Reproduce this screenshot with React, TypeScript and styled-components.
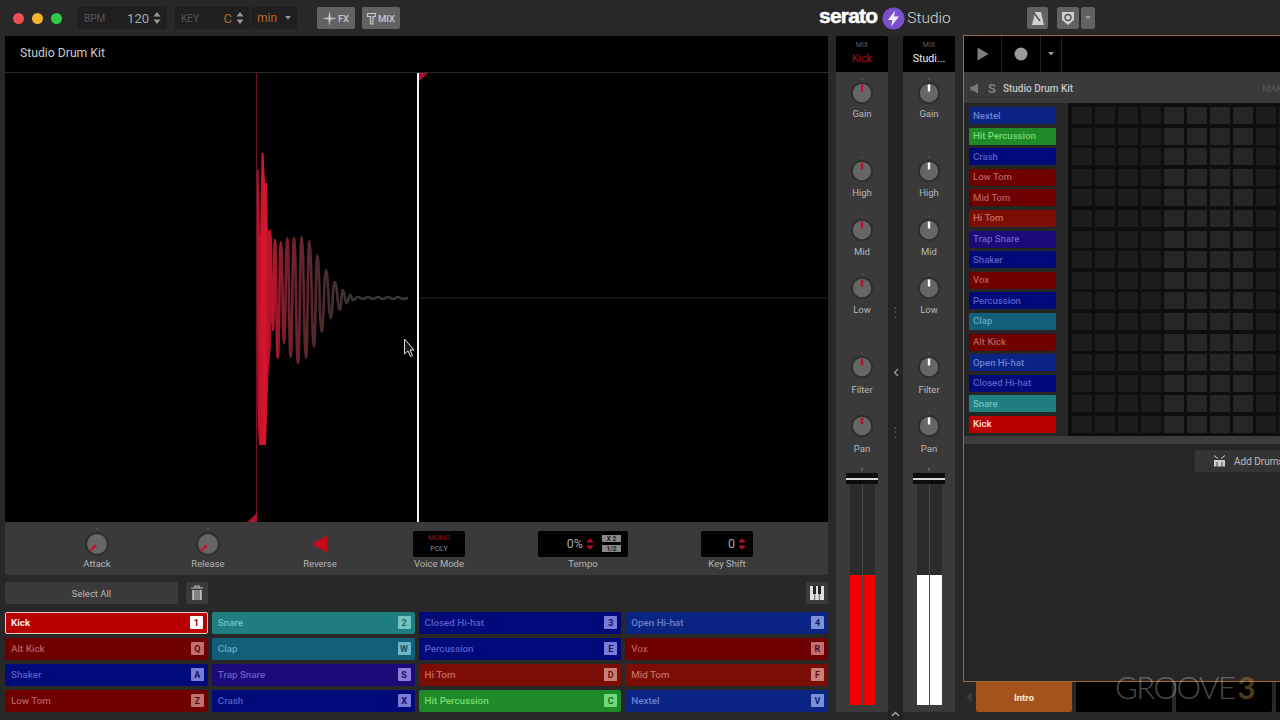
import React from "react";
import styled, { createGlobalStyle } from "styled-components";

const sans = `Roboto, "Liberation Sans", sans-serif`;

const GlobalStyle = createGlobalStyle`
  html, body {
    margin: 0;
    padding: 0;
    background: #282828;
    font-family: ${sans};
  }
  * {
    box-sizing: border-box;
  }
`;

type Tone = {
  bg: string;
  text: string;
  badge: string;
  badgeText: string;
};

const red: Tone = { bg: "#6f0000", text: "#b85c5c", badge: "#c07070", badgeText: "#5a0c0c" };
const rust: Tone = { bg: "#7a0e04", text: "#c26a60", badge: "#c8807a", badgeText: "#6a1008" };
const navy: Tone = { bg: "#000a78", text: "#5a5cc8", badge: "#7c7cd8", badgeText: "#10106a" };
const blue: Tone = { bg: "#0a2484", text: "#6a80cc", badge: "#7a90d8", badgeText: "#0a2070" };
const violet: Tone = { bg: "#1c0a78", text: "#6a5cc8", badge: "#8a7cd8", badgeText: "#1c0a68" };
const teal: Tone = { bg: "#1f7f80", text: "#70c0c0", badge: "#76c4c2", badgeText: "#1a6a6a" };
const sea: Tone = { bg: "#135e78", text: "#62aac0", badge: "#70b4c8", badgeText: "#105068" };
const green: Tone = { bg: "#1f8a28", text: "#74dc74", badge: "#74d87c", badgeText: "#147020" };
const active: Tone = { bg: "#b80000", text: "#ffe8e8", badge: "#ffffff", badgeText: "#8a0000" };

const pads: { name: string; hotkey: string; tone: Tone; selected?: boolean }[] = [
  { name: "Kick", hotkey: "1", tone: active, selected: true },
  { name: "Snare", hotkey: "2", tone: teal },
  { name: "Closed Hi-hat", hotkey: "3", tone: navy },
  { name: "Open Hi-hat", hotkey: "4", tone: blue },
  { name: "Alt Kick", hotkey: "Q", tone: red },
  { name: "Clap", hotkey: "W", tone: sea },
  { name: "Percussion", hotkey: "E", tone: navy },
  { name: "Vox", hotkey: "R", tone: red },
  { name: "Shaker", hotkey: "A", tone: navy },
  { name: "Trap Snare", hotkey: "S", tone: violet },
  { name: "Hi Tom", hotkey: "D", tone: rust },
  { name: "Mid Tom", hotkey: "F", tone: rust },
  { name: "Low Tom", hotkey: "Z", tone: red },
  { name: "Crash", hotkey: "X", tone: navy },
  { name: "Hit Percussion", hotkey: "C", tone: green },
  { name: "Nextel", hotkey: "V", tone: blue },
];

const tracks: { name: string; tone: Tone }[] = [
  { name: "Nextel", tone: blue },
  { name: "Hit Percussion", tone: green },
  { name: "Crash", tone: navy },
  { name: "Low Tom", tone: red },
  { name: "Mid Tom", tone: red },
  { name: "Hi Tom", tone: rust },
  { name: "Trap Snare", tone: violet },
  { name: "Shaker", tone: navy },
  { name: "Vox", tone: red },
  { name: "Percussion", tone: navy },
  { name: "Clap", tone: sea },
  { name: "Alt Kick", tone: red },
  { name: "Open Hi-hat", tone: blue },
  { name: "Closed Hi-hat", tone: navy },
  { name: "Snare", tone: teal },
  { name: "Kick", tone: active },
];

const knobs = [
  { label: "Gain", gap: 9, drop: 3 },
  { label: "High", gap: 40, drop: 4 },
  { label: "Mid", gap: 21, drop: 4 },
  { label: "Low", gap: 20, drop: 4 },
  { label: "Filter", gap: 41, drop: 5 },
  { label: "Pan", gap: 21, drop: 5 },
];

// waveform peaks read off the sample display, page coordinates
const wavePeaks = [
  [270, 230], [273, 330], [275, 240], [277.7, 358], [281, 242], [284, 343], [287.3, 238],
  [290.7, 357], [294, 238], [298, 363], [301.7, 237], [306, 358], [309.3, 241], [314, 347],
  [317.3, 255], [321.7, 332], [326, 270], [330.7, 318], [334.7, 282], [340, 310], [342.7, 290],
  [346.7, 303], [350, 295], [353, 300], [358, 297], [363, 299], [368, 297], [373, 299],
  [378, 297], [383, 299], [388, 297], [393, 299], [398, 297], [403, 299], [408, 298],
];

function wavePath() {
  let d = `M${wavePeaks[0][0]} ${wavePeaks[0][1]}`;
  for (let i = 1; i < wavePeaks.length; i++) {
    const [px, py] = wavePeaks[i - 1];
    const [x, y] = wavePeaks[i];
    const mid = (px + x) / 2;
    d += ` C${mid} ${py} ${mid} ${y} ${x} ${y}`;
  }
  return d;
}

function Stepper({ color }: { color: string }) {
  return (
    <svg width="8" height="14" viewBox="0 0 8 14">
      <path d="M4 1 L7.5 5.5 H0.5 Z" fill={color} />
      <path d="M4 13 L7.5 8.5 H0.5 Z" fill={color} />
    </svg>
  );
}

function Caret() {
  return (
    <svg width="6" height="4" viewBox="0 0 6 4">
      <path d="M0 0 H6 L3 3.5 Z" fill="#999" />
    </svg>
  );
}

function Knob({ angle, color, size = 24 }: { angle: number; color: string; size?: number }) {
  return (
    <KnobSvg width={size} height={size} viewBox="0 0 24 24">
      <line x1="12" y1="-2.5" x2="12" y2="-1" stroke="#666" />
      <circle cx="12" cy="12" r="11" fill="#2d2d2d" />
      <circle cx="12" cy="12" r="9.2" fill="#666666" />
      <line
        x1="12"
        y1="3.5"
        x2="12"
        y2="10.5"
        stroke={color}
        strokeWidth="2.4"
        transform={`rotate(${angle} 12 12)`}
      />
    </KnobSvg>
  );
}

function Waveform() {
  return (
    <WaveSvg viewBox="5 72 823 450">
      <defs>
        <linearGradient id="decay" gradientUnits="userSpaceOnUse" x1="268" y1="0" x2="352" y2="0">
          <stop offset="0" stopColor="#c8142c" />
          <stop offset="0.2" stopColor="#7c1e2c" />
          <stop offset="0.6" stopColor="#4e2a2c" />
          <stop offset="1" stopColor="#383632" />
        </linearGradient>
        <linearGradient id="attack" gradientUnits="userSpaceOnUse" x1="257" y1="0" x2="272" y2="0">
          <stop offset="0" stopColor="#b8122a" />
          <stop offset="0.5" stopColor="#d8142e" />
          <stop offset="1" stopColor="#9a1426" />
        </linearGradient>
      </defs>
      <line x1="5" y1="72.5" x2="828" y2="72.5" stroke="#2c2c2c" />
      <line x1="418" y1="298" x2="828" y2="298" stroke="#222222" />
      <line x1="256.5" y1="73" x2="256.5" y2="522" stroke="#701020" />
      <WaveBody>
        <path
          d="M257 298 V170 L258.5 170 L260 240 L261.5 153 L263.5 153 L265 183 L267 183 L268 230 L271 232 V345 L268.5 372 L266 445 L259 445 L257.5 420 Z"
          fill="url(#attack)"
        />
        <path d={wavePath()} fill="none" stroke="url(#decay)" strokeWidth="2.6" strokeLinejoin="round" />
      </WaveBody>
      <rect x="417" y="73" width="2" height="449" fill="#f2f2f2" />
      <path d="M419 73 H428 L419 81 Z" fill="#b01030" />
      <path d="M257 513 V522 H247 Z" fill="#b01030" />
      <path
        d="M404.5 339 V354 L408 351 L410.5 356.5 L412.5 355.5 L410 350 L414 350 Z"
        fill="#1c1c1c"
        stroke="#dcdcdc"
        strokeWidth="1"
      />
    </WaveSvg>
  );
}

function Strip({
  title,
  color,
  level,
  meter,
  gap,
}: {
  title: string;
  color: string;
  level: number;
  meter: string;
  gap: number;
}) {
  return (
    <StripColumn $gap={gap}>
      <StripHead>
        <StripMix>MIX</StripMix>
        <StripName $color={color}>{title}</StripName>
      </StripHead>
      <StripBody>
        {knobs.map((k) => (
          <KnobGroup key={k.label} $gap={k.gap}>
            <Knob angle={0} color={meter === "#ffffff" ? "#ffffff" : "#b81030"} />
            <KnobLabel $drop={k.drop}>{k.label}</KnobLabel>
          </KnobGroup>
        ))}
        <FaderHandle />
        <Meter>
          <MeterChannel>
            <MeterFill $color={meter} style={{ height: `${level}%` }} />
          </MeterChannel>
          <MeterChannel>
            <MeterFill $color={meter} style={{ height: `${level}%` }} />
          </MeterChannel>
        </Meter>
      </StripBody>
    </StripColumn>
  );
}

export default function App() {
  const cells = Array.from({ length: 160 }, (_, i) => i % 10);

  return (
    <Page>
      <GlobalStyle />
      <TopBar>
        <Lights>
          <Light $color="#ee5052" />
          <Light $color="#f5b32f" />
          <Light $color="#2fc94a" />
        </Lights>
        <ReadoutBox $width={89} $gap={16}>
          <ReadoutLabel>BPM</ReadoutLabel>
          <ReadoutValue $color="#a8a8a8">120</ReadoutValue>
          <Stepper color="#9a9a9a" />
        </ReadoutBox>
        <ReadoutBox $width={75} $gap={8}>
          <ReadoutLabel>KEY</ReadoutLabel>
          <ReadoutValue $color="#b5682a">C</ReadoutValue>
          <Stepper color="#9a9a9a" />
        </ReadoutBox>
        <ReadoutBox $width={46} $gap={1}>
          <MinText>min</MinText>
          <Caret />
        </ReadoutBox>
        <ToggleButton $gap={20}>
          <svg width="13" height="13" viewBox="0 0 13 13">
            <path d="M6.5 0.5 L7.3 5.7 L12.5 6.5 L7.3 7.3 L6.5 12.5 L5.7 7.3 L0.5 6.5 L5.7 5.7 Z" fill="#c8c8c8" stroke="#c8c8c8" strokeWidth="0.6" />
          </svg>
          FX
        </ToggleButton>
        <ToggleButton $gap={7}>
          <svg width="9" height="13" viewBox="0 0 9 13">
            <path d="M0.5 1.5 H8.5 V4.5 H6 V12 H3.5 V4.5 H0.5 Z" fill="none" stroke="#c8c8c8" strokeWidth="1.2" />
          </svg>
          MIX
        </ToggleButton>
        <Logo>
          <LogoWord>serato</LogoWord>
          <LogoMark>
            <svg width="23" height="23" viewBox="0 0 23 23">
              <circle cx="11.5" cy="11.5" r="11" fill="#7a4fd0" />
              <path d="M13 3.5 L6 13 H10.5 L9 19.5 L17 9.5 H12 Z" fill="#f4f0ff" />
            </svg>
          </LogoMark>
          <LogoStudio>Studio</LogoStudio>
        </Logo>
        <IconButton $gap={74} $width={21}>
          <svg width="14" height="15" viewBox="0 0 14 15">
            <path d="M4 1 H10 L13 14 H1 Z" fill="#d0d0d0" />
            <path d="M3 2 L9 10" stroke="#555" strokeWidth="1.5" />
          </svg>
        </IconButton>
        <IconButton $gap={9} $width={22}>
          <svg width="14" height="15" viewBox="0 0 14 15">
            <path d="M1 1 H13 V9 L7 14 L1 9 Z" fill="#d0d0d0" />
            <circle cx="7" cy="6.5" r="3" fill="none" stroke="#555" strokeWidth="1.4" />
          </svg>
        </IconButton>
        <IconButton $gap={2} $width={14}>
          <Caret />
        </IconButton>
      </TopBar>

      <Main>
        <LeftColumn>
          <KitHeader>Studio Drum Kit</KitHeader>
          <Waveform />
          <Controls>
            <Control>
              <ControlTop>
                <Knob angle={-135} color="#d01030" size={26} />
              </ControlTop>
              <ControlLabel>Attack</ControlLabel>
            </Control>
            <Control>
              <ControlTop>
                <Knob angle={-135} color="#d01030" size={26} />
              </ControlTop>
              <ControlLabel>Release</ControlLabel>
            </Control>
            <Control>
              <ControlTop>
                <svg width="18" height="20" viewBox="0 0 18 20">
                  <path d="M16.5 1 V19 L1 10 Z" fill="#c00c14" />
                </svg>
              </ControlTop>
              <ControlLabel>Reverse</ControlLabel>
            </Control>
            <Control>
              <ControlTop>
                <VoiceBox>
                  <VoiceOption $on>MONO</VoiceOption>
                  <VoiceOption>POLY</VoiceOption>
                </VoiceBox>
              </ControlTop>
              <ControlLabel>Voice Mode</ControlLabel>
            </Control>
            <Control>
              <ControlTop>
                <ValueBox $width={90}>
                  <ValueText>0%</ValueText>
                  <Stepper color="#b81020" />
                  <RateStack>
                    <RateChip>X 2</RateChip>
                    <RateChip>1/2</RateChip>
                  </RateStack>
                </ValueBox>
              </ControlTop>
              <ControlLabel>Tempo</ControlLabel>
            </Control>
            <Control>
              <ControlTop>
                <ValueBox $width={52}>
                  <ValueText>0</ValueText>
                  <Stepper color="#b81020" />
                </ValueBox>
              </ControlTop>
              <ControlLabel>Key Shift</ControlLabel>
            </Control>
          </Controls>

          <PadTools>
            <SelectAll>Select All</SelectAll>
            <SquareTool>
              <svg width="14" height="16" viewBox="0 0 14 16">
                <path d="M1 3 H13 M5 3 V1 H9 V3" fill="none" stroke="#bdbdbd" strokeWidth="1.2" />
                <path d="M2.2 5 H11.8 V15 H2.2 Z" fill="#bdbdbd" />
                <path d="M5 5 V15 M7 5 V15 M9 5 V15" stroke="#3a3a3a" strokeWidth="0.9" />
              </svg>
            </SquareTool>
            <PianoTool>
              <svg width="14" height="14" viewBox="0 0 14 14">
                <rect width="14" height="14" fill="#dedede" />
                <path d="M4.7 0 V14 M9.3 0 V14" stroke="#3a3a3a" strokeWidth="0.8" />
                <path d="M3 0 H6 V8 H3 Z M8 0 H11 V8 H8 Z" fill="#222" />
              </svg>
            </PianoTool>
          </PadTools>

          <PadGrid>
            {pads.map((pad) => (
              <Pad key={pad.name} $tone={pad.tone} $selected={pad.selected}>
                <PadName $selected={pad.selected}>{pad.name}</PadName>
                <Hotkey $tone={pad.tone}>{pad.hotkey}</Hotkey>
              </Pad>
            ))}
          </PadGrid>
        </LeftColumn>

        <Strip title="Kick" color="#a81020" level={59} meter="#ee0000" gap={8} />
        <Gutter>
          <GripDots>⋮</GripDots>
          <GutterArrow $top={48}>
            <svg width="6" height="9" viewBox="0 0 6 9">
              <path d="M5 1 L1.5 4.5 L5 8" fill="none" stroke="#999" strokeWidth="1.3" />
            </svg>
          </GutterArrow>
          <GripDots $top={47}>⋮</GripDots>
          <GutterArrow $auto>
            <svg width="9" height="6" viewBox="0 0 9 6">
              <path d="M1 5 L4.5 1.5 L8 5" fill="none" stroke="#aaa" strokeWidth="1.4" />
            </svg>
          </GutterArrow>
        </Gutter>
        <Strip title="Studi..." color="#f0f0f0" level={59} meter="#ffffff" gap={0} />

        <RightColumn>
          <ArrangePanel>
            <Transport>
              <TransportCell $width={38}>
                <svg width="12" height="14" viewBox="0 0 12 14">
                  <path d="M0.5 0.5 L11.5 7 L0.5 13.5 Z" fill="#7e7e7e" />
                </svg>
              </TransportCell>
              <TransportCell $width={39}>
                <svg width="14" height="14" viewBox="0 0 14 14">
                  <circle cx="7" cy="7" r="6.5" fill="#9a9a9a" />
                </svg>
              </TransportCell>
              <TransportCell $width={21}>
                <Caret />
              </TransportCell>
            </Transport>
            <TrackHeader>
              <svg width="9" height="11" viewBox="0 0 9 11">
                <path d="M8 0.5 V10.5 L3 7.5 H0.5 V3.5 H3 Z" fill="#7a7a7a" />
              </svg>
              <SoloMark>S</SoloMark>
              <TrackTitle>Studio Drum Kit</TrackTitle>
              <TrackMode>MAKE</TrackMode>
            </TrackHeader>
            <Sequencer>
              <TrackList>
                {tracks.map((t) => (
                  <TrackLabel key={t.name} $tone={t.tone}>
                    {t.name}
                  </TrackLabel>
                ))}
              </TrackList>
              <StepGrid>
                {cells.map((col, i) => (
                  <StepCell key={i} $light={col >= 4 && col < 8} />
                ))}
              </StepGrid>
            </Sequencer>
            <ScrollBand />
            <AddDrums>
              <svg width="13" height="12" viewBox="0 0 13 12">
                <path d="M1 0.5 L5 3.5 M12 0.5 L8 3.5" stroke="#cfcfcf" strokeWidth="1" />
                <path d="M1 5 H12 V11.5 H1 Z" fill="#cfcfcf" />
                <path d="M4 7 V11.5 M9 7 V11.5" stroke="#444" strokeWidth="1" />
              </svg>
              <span>Add Drums</span>
            </AddDrums>
          </ArrangePanel>
          <SceneRow>
            <SceneArrow>
              <svg width="6" height="10" viewBox="0 0 6 10">
                <path d="M5.5 0.5 V9.5 L0.5 5 Z" fill="#3e3e3e" />
              </svg>
            </SceneArrow>
            <SceneTab $active>Intro</SceneTab>
            <SceneTab />
            <SceneTab />
            <SceneTab />
          </SceneRow>
          <Watermark>
            GROOVE<WatermarkNum>3</WatermarkNum>
          </Watermark>
        </RightColumn>
      </Main>
    </Page>
  );
}

const Page = styled.div`
  width: 1280px;
  height: 720px;
  overflow: hidden;
  background: #282828;
`;

const TopBar = styled.div`
  height: 36px;
  display: flex;
  align-items: center;
  padding-left: 13px;
`;

const Lights = styled.div`
  display: flex;
  gap: 8px;
  width: 49px;
`;

const Light = styled.span<{ $color: string }>`
  width: 11px;
  height: 11px;
  flex: none;
  border-radius: 50%;
  background: ${({ $color }) => $color};
`;

const ReadoutBox = styled.div<{ $width: number; $gap: number }>`
  width: ${({ $width }) => $width}px;
  margin-left: ${({ $gap }) => $gap}px;
  height: 22px;
  padding: 0 6px;
  display: flex;
  align-items: center;
  background: #1f1f1f;
  border-radius: 2px;
`;

const ReadoutLabel = styled.span`
  font-size: 10px;
  color: #585858;
`;

const ReadoutValue = styled.span<{ $color: string }>`
  margin-left: auto;
  margin-right: 4px;
  font-size: 13px;
  color: ${({ $color }) => $color};
`;

const MinText = styled.span`
  font-size: 12px;
  color: #b5682a;
  margin-right: auto;
`;

const ToggleButton = styled.div<{ $gap: number }>`
  width: 38px;
  height: 22px;
  margin-left: ${({ $gap }) => $gap}px;
  display: flex;
  align-items: center;
  justify-content: center;
  gap: 2px;
  background: #626262;
  border-radius: 2px;
  font-size: 9.5px;
  font-weight: 500;
  color: #c8c8c8;
`;

const Logo = styled.div`
  width: 134px;
  margin-left: 419px;
  margin-top: -4px;
  display: flex;
  align-items: center;
  flex: none;
`;

const LogoWord = styled.span`
  flex: none;
  font-family: "Liberation Sans", sans-serif;
  font-size: 21px;
  font-weight: 700;
  letter-spacing: -0.8px;
  color: #ffffff;
  -webkit-text-stroke: 0.5px #ffffff;
  margin-right: 5px;
`;

const LogoMark = styled.span`
  display: flex;
  flex: none;
  margin-top: 4px;
`;

const LogoStudio = styled.span`
  flex: none;
  margin: 4px 0 0 2px;
  font-size: 15.5px;
  font-weight: 300;
  color: #d8d8d8;
`;

const IconButton = styled.div<{ $gap: number; $width: number }>`
  width: ${({ $width }) => $width}px;
  height: 22px;
  margin-left: ${({ $gap }) => $gap}px;
  flex: none;
  display: flex;
  align-items: center;
  justify-content: center;
  background: #626262;
  border-radius: 2px;
`;

const Main = styled.div`
  height: 684px;
  display: flex;
  align-items: flex-start;
  padding-left: 5px;
`;

const LeftColumn = styled.div`
  width: 823px;
  flex: none;
  display: flex;
  flex-direction: column;
`;

const KitHeader = styled.div`
  height: 36px;
  padding: 0 0 2px 15px;
  display: flex;
  align-items: center;
  background: #000000;
  font-size: 12.2px;
  color: #cccccc;
`;

const WaveSvg = styled.svg`
  display: block;
  width: 823px;
  height: 450px;
  background: #000000;
`;

const WaveBody = styled.g`
  filter: blur(0.5px);
`;

const KnobSvg = styled.svg`
  display: block;
  overflow: visible;
`;

const Controls = styled.div`
  height: 53px;
  padding-left: 36px;
  display: grid;
  grid-template-columns: 112px 110px 114px 124px 164px 124px;
  background: #3a3a3a;
`;

const Control = styled.div`
  display: flex;
  flex-direction: column;
  align-items: center;
`;

const ControlTop = styled.div`
  height: 36px;
  padding-top: 7px;
  display: flex;
  align-items: center;
  justify-content: center;
`;

const ControlLabel = styled.span`
  font-size: 9.5px;
  color: #b4b4b4;
`;

const VoiceBox = styled.div`
  width: 52px;
  height: 26px;
  display: flex;
  flex-direction: column;
  align-items: center;
  justify-content: center;
  gap: 3px;
  background: #000000;
  border-radius: 2px;
`;

const VoiceOption = styled.span<{ $on?: boolean }>`
  font-size: 7.5px;
  line-height: 8px;
  color: ${({ $on }) => ($on ? "#a01018" : "#8a8a8a")};
`;

const ValueBox = styled.div<{ $width: number }>`
  width: ${({ $width }) => $width}px;
  height: 26px;
  padding-right: 7px;
  display: flex;
  align-items: center;
  justify-content: flex-end;
  gap: 3px;
  background: #000000;
  border-radius: 2px;
`;

const ValueText = styled.span`
  font-size: 12.5px;
  color: #a8a8a8;
`;

const RateStack = styled.div`
  display: flex;
  flex-direction: column;
  gap: 3px;
  margin-left: 5px;
`;

const RateChip = styled.span`
  width: 19px;
  height: 7px;
  display: flex;
  align-items: center;
  justify-content: center;
  background: #8a8a8a;
  font-size: 6.5px;
  font-weight: 700;
  color: #1c1c1c;
`;

const PadTools = styled.div`
  height: 22px;
  margin-top: 7px;
  display: flex;
`;

const SelectAll = styled.div`
  width: 173px;
  display: flex;
  align-items: center;
  justify-content: center;
  background: #3a3a3a;
  border-radius: 2px;
  font-size: 9.5px;
  color: #b8b8b8;
`;

const SquareTool = styled.div`
  width: 22px;
  margin-left: 8px;
  display: flex;
  align-items: center;
  justify-content: center;
  background: #3a3a3a;
  border-radius: 2px;
`;

const PianoTool = styled(SquareTool)`
  margin-left: auto;
`;

const PadGrid = styled.div`
  margin-top: 8px;
  display: grid;
  grid-template-columns: repeat(4, 1fr);
  grid-auto-rows: 22px;
  column-gap: 4px;
  row-gap: 4px;
`;

const Pad = styled.div<{ $tone: Tone; $selected?: boolean }>`
  padding: 0 4px 1px ${({ $selected }) => ($selected ? "5px" : "6px")};
  display: flex;
  align-items: center;
  justify-content: space-between;
  background: ${({ $tone }) => $tone.bg};
  border: ${({ $selected }) => ($selected ? "1px solid #f0c8c8" : "none")};
  border-radius: 2px;
  color: ${({ $tone }) => $tone.text};
`;

const PadName = styled.span<{ $selected?: boolean }>`
  font-size: 9.8px;
  font-weight: ${({ $selected }) => ($selected ? 700 : 500)};
`;

const Hotkey = styled.span<{ $tone: Tone }>`
  width: 13px;
  height: 13px;
  display: flex;
  align-items: center;
  justify-content: center;
  background: ${({ $tone }) => $tone.badge};
  border-radius: 1px;
  font-size: 9px;
  font-weight: 700;
  color: ${({ $tone }) => $tone.badgeText};
`;

const StripColumn = styled.div<{ $gap: number }>`
  width: 52px;
  flex: none;
  margin-left: ${({ $gap }) => $gap}px;
  display: flex;
  flex-direction: column;
`;

const StripHead = styled.div`
  height: 36px;
  padding-top: 5px;
  display: flex;
  flex-direction: column;
  align-items: center;
  background: #000000;
  border-radius: 2px 2px 0 0;
`;

const StripMix = styled.span`
  font-size: 7px;
  line-height: 9px;
  color: #5e5e5e;
`;

const StripName = styled.span<{ $color: string }>`
  margin-top: 2px;
  font-size: 10.6px;
  color: ${({ $color }) => $color};
`;

const StripBody = styled.div`
  height: 640px;
  display: flex;
  flex-direction: column;
  align-items: center;
  background: #3a3a3a;
`;

const KnobGroup = styled.div<{ $gap: number }>`
  height: 38px;
  margin-top: ${({ $gap }) => $gap}px;
  display: flex;
  flex-direction: column;
  align-items: center;
  flex: none;
`;

const KnobLabel = styled.span<{ $drop: number }>`
  margin-top: ${({ $drop }) => $drop}px;
  font-size: 9.5px;
  line-height: 11px;
  color: #b8b8b8;
`;

const FaderHandle = styled.div`
  position: relative;
  width: 32px;
  height: 11px;
  margin-top: 21px;
  flex: none;
  background: linear-gradient(#0c0c0c 0 5px, #d8d8d8 5px 7px, #0c0c0c 7px);

  &::before {
    content: "";
    position: absolute;
    left: 15px;
    top: -5px;
    width: 2px;
    height: 3px;
    background: #5a5a5a;
  }
`;

const Meter = styled.div`
  width: 25px;
  height: 221px;
  flex: none;
  display: flex;
  justify-content: space-between;
  background: #4a4a4a;
`;

const MeterChannel = styled.div`
  width: 12px;
  display: flex;
  align-items: flex-end;
  background: #2b2b2b;
`;

const MeterFill = styled.div<{ $color: string }>`
  width: 100%;
  background: ${({ $color }) => $color};
`;

const Gutter = styled.div`
  width: 15px;
  height: 684px;
  flex: none;
  padding-top: 268px;
  display: flex;
  flex-direction: column;
  align-items: center;
  background: #232323;
`;

const GripDots = styled.span<{ $top?: number }>`
  margin-top: ${({ $top }) => $top ?? 0}px;
  font-size: 13px;
  line-height: 16px;
  color: #555555;
`;

const GutterArrow = styled.span<{ $top?: number; $auto?: boolean }>`
  display: flex;
  margin-top: ${({ $top, $auto }) => ($auto ? "auto" : `${$top ?? 0}px`)};
  margin-bottom: ${({ $auto }) => ($auto ? "3px" : "0")};
`;

const RightColumn = styled.div`
  position: relative;
  width: 340px;
  margin-left: 8px;
  flex: none;
  margin-top: -1px;
`;

const ArrangePanel = styled.div`
  height: 647px;
  border: 1px solid #a0683a;
  background: #262626;
`;

const Transport = styled.div`
  height: 36px;
  display: flex;
  background: #000000;
`;

const TransportCell = styled.div<{ $width: number }>`
  width: ${({ $width }) => $width}px;
  display: flex;
  align-items: center;
  justify-content: center;
  border-right: 1px solid #222222;
`;

const TrackHeader = styled.div`
  height: 31px;
  padding: 1px 0 0 6px;
  display: flex;
  align-items: center;
  background: #3a3a3a;
`;

const SoloMark = styled.span`
  margin-left: 9px;
  font-size: 13px;
  font-weight: 500;
  color: #8a8a8a;
`;

const TrackTitle = styled.span`
  margin-left: 7px;
  font-size: 10px;
  font-weight: 500;
  color: #c4c4c4;
`;

const TrackMode = styled.span`
  margin-left: 189px;
  font-size: 9.5px;
  color: #5c5c5c;
`;

const Sequencer = styled.div`
  height: 333px;
  display: flex;
  background: #262626;
`;

const TrackList = styled.div`
  width: 104px;
  flex: none;
  padding: 4px 0 0 5px;
  display: grid;
  grid-template-rows: repeat(16, 17px);
  row-gap: 3.6px;
`;

const TrackLabel = styled.div<{ $tone: Tone }>`
  width: 87px;
  padding: 0 0 1px 4px;
  display: flex;
  align-items: center;
  background: ${({ $tone }) => $tone.bg};
  border-radius: 1px;
  font-size: 9.6px;
  font-weight: 500;
  color: ${({ $tone }) => $tone.text};
`;

const StepGrid = styled.div`
  flex: 1;
  padding: 4px 0 0 4px;
  display: grid;
  grid-template-columns: repeat(10, 20px);
  grid-template-rows: repeat(16, 17px);
  column-gap: 3px;
  row-gap: 3.6px;
  background: #0e0e0e;
`;

const StepCell = styled.div<{ $light: boolean }>`
  background: ${({ $light }) => ($light ? "#262626" : "#1c1c1c")};
  border-radius: 1px;
`;

const ScrollBand = styled.div`
  height: 8px;
  background: #3c3c3c;
`;

const AddDrums = styled.div`
  width: 120px;
  height: 22px;
  margin: 6px 0 0 231px;
  padding-left: 18px;
  display: flex;
  align-items: center;
  gap: 8px;
  background: #343434;
  font-size: 10px;
  color: #bcbcbc;
`;

const SceneRow = styled.div`
  height: 30px;
  padding-left: 3px;
  display: flex;
  align-items: center;
  gap: 4px;
`;

const SceneArrow = styled.span`
  display: flex;
  flex: none;
`;

const SceneTab = styled.div<{ $active?: boolean }>`
  width: 96px;
  height: 30px;
  flex: none;
  display: flex;
  align-items: center;
  justify-content: center;
  background: ${({ $active }) => ($active ? "#a4541a" : "#000000")};
  border-radius: 0 0 2px 2px;
  font-size: 9.5px;
  font-weight: 700;
  color: #f4e8da;
`;

const Watermark = styled.div`
  position: absolute;
  left: 152px;
  top: 632px;
  font-family: Lato, sans-serif;
  font-size: 31px;
  font-weight: 300;
  line-height: 40px;
  letter-spacing: -1.5px;
  color: rgba(255, 255, 255, 0.3);
`;

const WatermarkNum = styled.span`
  margin-left: 3px;
  font-weight: 700;
  color: rgba(200, 160, 60, 0.4);
`;
